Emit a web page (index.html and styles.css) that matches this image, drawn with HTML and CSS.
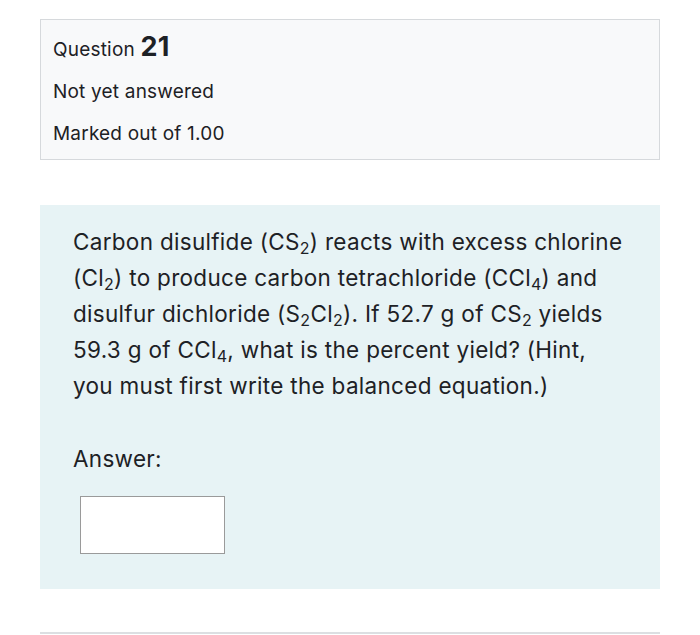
FILE: index.html
```html
<!DOCTYPE html>
<html>
<head>
<meta charset="utf-8">
<link rel="stylesheet" href="styles.css">
</head>
<body>
<div class="page">
  <div class="info">
    <h3 class="qno">Question <span class="num">21</span></h3>
    <div class="state">Not yet answered</div>
    <div class="grade">Marked out of 1.00</div>
  </div>
  <div class="content">
    <p class="qtext">Carbon disulfide (CS<sub>2</sub>) reacts with excess chlorine (Cl<sub>2</sub>) to produce carbon tetrachloride (CCl<sub>4</sub>) and disulfur dichloride (S<sub>2</sub>Cl<sub>2</sub>). If 52.7 g of CS<sub>2</sub> yields 59.3 g of CCl<sub>4</sub>, what is the percent yield? (Hint, you must first write the balanced equation.)</p>
    <div class="ablock">
      <label class="alabel" for="ans">Answer:</label>
      <input class="answer" id="ans" type="text">
    </div>
  </div>
  <div class="rule"></div>
</div>
</body>
</html>
```
FILE: styles.css
```css
html, body {
  margin: 0;
  padding: 0;
  background: #ffffff;
}
body {
  font-family: Inter, "Liberation Sans", sans-serif;
  color: #1d2125;
}
.page {
  padding: 19px 40px 0 40px;
}
.info {
  background: #f8f9fa;
  border: 1px solid #d6d9dc;
  padding: 9px 12px 4px 12px;
}
.qno {
  margin: 0;
  font-weight: 400;
  font-size: 19px;
  line-height: 42px;
  height: 42px;
  letter-spacing: 0.2px;
}
.num {
  font-weight: 700;
  font-size: 27px;
  line-height: 1;
}
.state, .grade {
  font-size: 19px;
  line-height: 42px;
  letter-spacing: 0.2px;
}
.content {
  margin-top: 45px;
  background: #e7f3f5;
  padding: 19px 33px 35px 33px;
}
.qtext {
  margin: 0;
  font-size: 22.5px;
  line-height: 36px;
  letter-spacing: 0.3px;
}
.qtext sub {
  font-size: 16px;
  line-height: 1;
  vertical-align: -4px;
}
.ablock {
  margin-top: 37px;
}
.alabel {
  display: block;
  font-size: 22.5px;
  line-height: 36px;
  letter-spacing: 0.3px;
}
.answer {
  display: block;
  margin: 19px 0 0 7px;
  box-sizing: border-box;
  width: 145px;
  height: 58px;
  border: 1.5px solid #9a9a9a;
  background: #fff;
  padding: 0;
}
.rule {
  margin-top: 43px;
  height: 2px;
  background: #dcdfe2;
}
```
